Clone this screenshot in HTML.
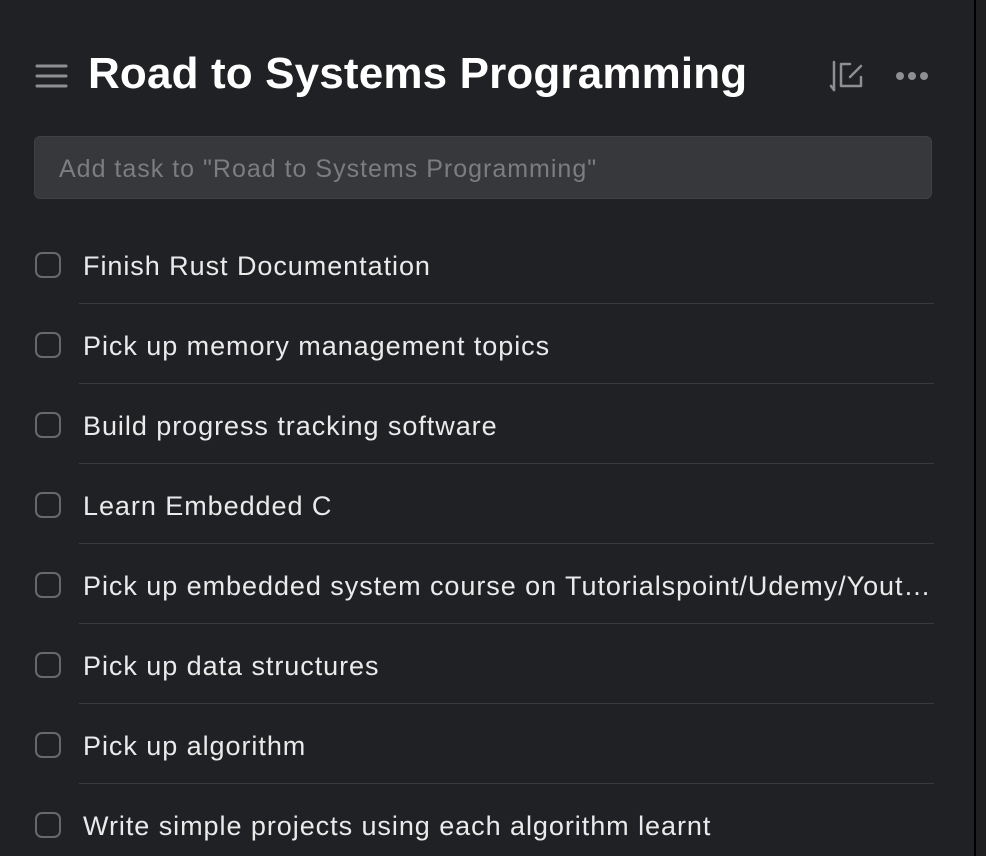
<!DOCTYPE html>
<html><head><style>
html,body{margin:0;width:986px;height:856px;background:#202124;overflow:hidden;font-family:"Liberation Sans",sans-serif;position:relative}
.vline{position:absolute;left:974px;top:0;width:2px;height:856px;background:#000}
.right{position:absolute;left:976px;top:0;width:10px;height:856px;background:#1f1f21}
.title{position:absolute;left:88px;top:49px;font-size:44px;font-weight:bold;color:#fff;letter-spacing:0.15px;white-space:nowrap}
.input{position:absolute;left:34px;top:136px;width:896px;height:61px;background:#37383c;border:1px solid #3f4044;border-radius:6px}
.input span{position:absolute;left:24px;top:18px;font-size:25px;letter-spacing:1px;color:#7c7d81;white-space:nowrap}
.row{position:absolute;left:0;width:974px;height:30px}
.cb{position:absolute;left:35px;top:-14px;width:26px;height:26px;border:2px solid #67686b;border-radius:7px;box-sizing:border-box}
.t{position:absolute;left:83px;top:-16px;font-size:27px;letter-spacing:0.95px;color:#eaeaea;white-space:nowrap;width:850px;overflow:hidden;text-overflow:ellipsis;line-height:32px}
.sep{position:absolute;left:79px;top:37px;width:855px;height:1px;background:#3a3b3e}
</style></head><body>
<div class="vline"></div><div class="right"></div>
<svg style="position:absolute;left:34px;top:62px" width="36" height="30"><g stroke="#8e8f92" stroke-width="3" stroke-linecap="round"><line x1="3" y1="4" x2="32" y2="4"/><line x1="3" y1="14" x2="32" y2="14"/><line x1="3" y1="24" x2="32" y2="24"/></g></svg>
<div class="title">Road to Systems Programming</div>
<svg style="position:absolute;left:828px;top:58px" width="40" height="36"><g stroke="#8e8f92" stroke-width="2.5" fill="none" stroke-linecap="round" stroke-linejoin="round"><line x1="6" y1="4" x2="6" y2="32"/><polyline points="3,28 6,32"/><path d="M22 6 H13 V28 H33 V19"/><line x1="22" y1="19" x2="33" y2="8"/></g></svg>
<svg style="position:absolute;left:894px;top:68px" width="36" height="16"><g fill="#8e8f92"><circle cx="6" cy="8" r="4"/><circle cx="18" cy="8" r="4"/><circle cx="30" cy="8" r="4"/></g></svg>
<div class="input"><span>Add task to "Road to Systems Programming"</span></div>
<div class="row" style="top:266px"><div class="cb"></div><div class="t">Finish Rust Documentation</div><div class="sep"></div></div>
<div class="row" style="top:346px"><div class="cb"></div><div class="t">Pick up memory management topics</div><div class="sep"></div></div>
<div class="row" style="top:426px"><div class="cb"></div><div class="t">Build progress tracking software</div><div class="sep"></div></div>
<div class="row" style="top:506px"><div class="cb"></div><div class="t">Learn Embedded C</div><div class="sep"></div></div>
<div class="row" style="top:586px"><div class="cb"></div><div class="t">Pick up embedded system course on Tutorialspoint/Udemy/Youtube</div><div class="sep"></div></div>
<div class="row" style="top:666px"><div class="cb"></div><div class="t">Pick up data structures</div><div class="sep"></div></div>
<div class="row" style="top:746px"><div class="cb"></div><div class="t">Pick up algorithm</div><div class="sep"></div></div>
<div class="row" style="top:826px"><div class="cb"></div><div class="t">Write simple projects using each algorithm learnt</div></div>
</body></html>
